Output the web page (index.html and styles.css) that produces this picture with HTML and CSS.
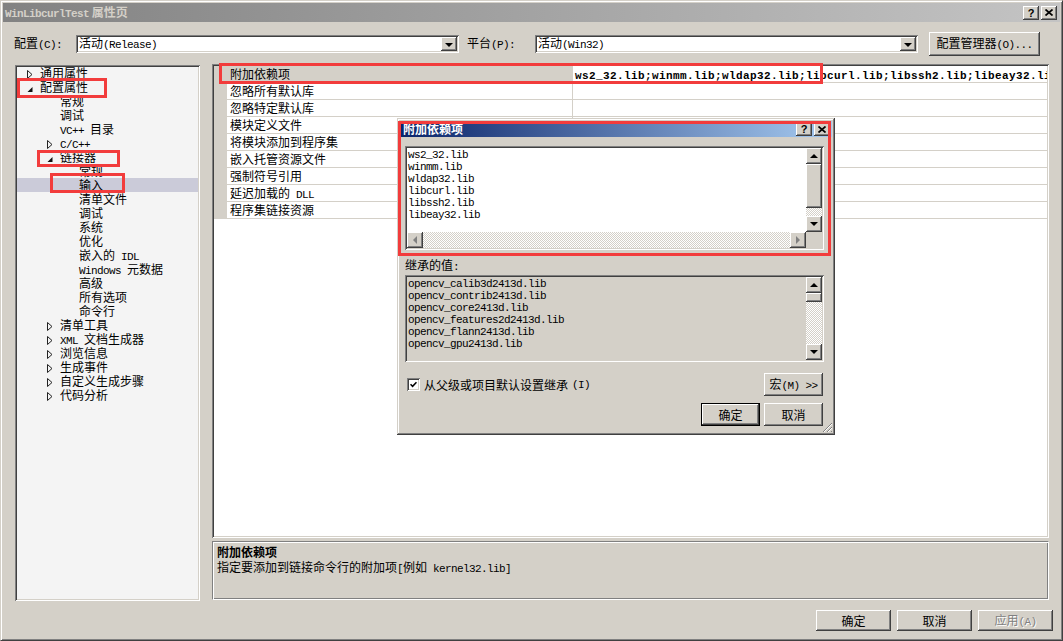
FILE: index.html
```html
<!DOCTYPE html>
<html lang="zh-CN">
<head>
    <meta charset="utf-8"/>
    <title>WinLibcurlTest 属性页</title>
    <link rel="stylesheet" href="styles.css">
</head>
<body>
<svg class="defs" width="0" height="0">
    <symbol id="tw-closed" viewBox="0 0 6 9"><path d="M.5.5 5 4.5.5 8.5z" fill="none" stroke="#222"/></symbol>
    <symbol id="tw-open" viewBox="0 0 6 9"><path d="M5.5 3v5h-5z" fill="#111"/></symbol>
    <symbol id="ic-x" viewBox="0 0 8 7"><path d="M.5.5l7 6M7.5.5l-7 6" stroke="#000" stroke-width="1.7"/></symbol>
</svg>

<div class="window">
    <div class="titlebar">
        <span class="title"><span class="m">WinLibcurlTest</span> 属性页</span>
        <div class="caption-btns">
            <span class="cap-btn">?</span>
            <span class="cap-btn"><svg width="8" height="7"><use href="#ic-x"/></svg></span>
        </div>
    </div>

    <div class="toolbar">
        <label class="tb-label first">配置<span class="m">(C):</span></label>
        <div class="combo"><span class="combo-text">活动<span class="m">(Release)</span></span><span class="drop"></span></div>
        <label class="tb-label second">平台<span class="m">(P):</span></label>
        <div class="combo"><span class="combo-text">活动<span class="m">(Win32)</span></span><span class="drop"></span></div>
        <button class="btn cfg-btn">配置管理器<span class="m">(O)...</span></button>
    </div>

    <div class="main">
        <ul class="tree">
            <li class="l0"><svg class="tw"><use href="#tw-closed"/></svg>通用属性</li>
            <li class="l0"><svg class="tw"><use href="#tw-open"/></svg>配置属性</li>
            <li class="l1">常规</li>
            <li class="l1">调试</li>
            <li class="l1"><span class="m">VC++ </span>目录</li>
            <li class="l1"><svg class="tw"><use href="#tw-closed"/></svg><span class="m">C/C++</span></li>
            <li class="l1"><svg class="tw"><use href="#tw-open"/></svg>链接器</li>
            <li class="l2">常规</li>
            <li class="l2 sel">输入</li>
            <li class="l2">清单文件</li>
            <li class="l2">调试</li>
            <li class="l2">系统</li>
            <li class="l2">优化</li>
            <li class="l2">嵌入的<span class="m"> IDL</span></li>
            <li class="l2"><span class="m">Windows </span>元数据</li>
            <li class="l2">高级</li>
            <li class="l2">所有选项</li>
            <li class="l2">命令行</li>
            <li class="l1"><svg class="tw"><use href="#tw-closed"/></svg>清单工具</li>
            <li class="l1"><svg class="tw"><use href="#tw-closed"/></svg><span class="m">XML </span>文档生成器</li>
            <li class="l1"><svg class="tw"><use href="#tw-closed"/></svg>浏览信息</li>
            <li class="l1"><svg class="tw"><use href="#tw-closed"/></svg>生成事件</li>
            <li class="l1"><svg class="tw"><use href="#tw-closed"/></svg>自定义生成步骤</li>
            <li class="l1"><svg class="tw"><use href="#tw-closed"/></svg>代码分析</li>
        </ul>

        <div class="right">
            <div class="grid">
                <div class="prop sel"><span class="gut"></span><span class="name">附加依赖项</span><span class="val"><b class="mb">ws2_32.lib;winmm.lib;wldap32.lib;libcurl.lib;libssh2.lib;libeay32.li</b></span></div>
                <div class="prop"><span class="gut"></span><span class="name">忽略所有默认库</span><span class="val"></span></div>
                <div class="prop"><span class="gut"></span><span class="name">忽略特定默认库</span><span class="val"></span></div>
                <div class="prop"><span class="gut"></span><span class="name">模块定义文件</span><span class="val"></span></div>
                <div class="prop"><span class="gut"></span><span class="name">将模块添加到程序集</span><span class="val"></span></div>
                <div class="prop"><span class="gut"></span><span class="name">嵌入托管资源文件</span><span class="val"></span></div>
                <div class="prop"><span class="gut"></span><span class="name">强制符号引用</span><span class="val"></span></div>
                <div class="prop"><span class="gut"></span><span class="name">延迟加载的<span class="m"> DLL</span></span><span class="val"></span></div>
                <div class="prop"><span class="gut"></span><span class="name">程序集链接资源</span><span class="val"></span></div>
            </div>
            <div class="desc">
                <div class="desc-title">附加依赖项</div>
                <div>指定要添加到链接命令行的附加项<span class="m">[</span>例如<span class="m"> kernel32.lib]</span></div>
            </div>
        </div>
    </div>

    <div class="footer">
        <button class="btn">确定</button>
        <button class="btn">取消</button>
        <button class="btn disabled">应用<span class="m">(A)</span></button>
    </div>

    <!-- 附加依赖项 弹出框 -->
    <div class="dlg">
        <div class="dlg-title">
            <span>附加依赖项</span>
            <div class="caption-btns">
                <span class="cap-btn">?</span>
                <span class="cap-btn"><svg width="8" height="7"><use href="#ic-x"/></svg></span>
            </div>
        </div>
        <div class="dlg-body">
            <div class="edit">
                <div class="edit-text mono">ws2_32.lib<br>winmm.lib<br>wldap32.lib<br>libcurl.lib<br>libssh2.lib<br>libeay32.lib</div>
                <div class="vscroll">
                    <span class="sb up"></span><span class="thumb big"></span><span class="track"></span><span class="sb dn"></span>
                </div>
                <div class="hscroll">
                    <span class="sb lt"></span><span class="track"></span><span class="sb rt"></span>
                </div>
                <div class="corner"></div>
            </div>
            <div class="inh-label">继承的值<span class="m">:</span></div>
            <div class="inh">
                <div class="inh-text mono">opencv_calib3d2413d.lib<br>opencv_contrib2413d.lib<br>opencv_core2413d.lib<br>opencv_features2d2413d.lib<br>opencv_flann2413d.lib<br>opencv_gpu2413d.lib</div>
                <div class="vscroll">
                    <span class="sb up"></span><span class="thumb small"></span><span class="track"></span><span class="sb dn"></span>
                </div>
            </div>
            <div class="dlg-row">
                <label class="chk"><span class="box"><svg width="7" height="7" viewBox="0 0 7 7"><path d="M.5 3.2 2.6 5.3 6.5 1.2" fill="none" stroke="#000" stroke-width="1.6"/></svg></span>从父级或项目默认设置继承<span class="m">(I)</span></label>
                <button class="btn dbtn">宏<span class="m">(M) &gt;&gt;</span></button>
            </div>
            <div class="dlg-row end">
                <button class="btn dbtn default">确定</button>
                <button class="btn dbtn">取消</button>
            </div>
        </div>
        <svg class="grip" width="11" height="11" viewBox="0 0 11 11">
            <path d="M10 1 1 10M10 5 5 10M10 9 9 10" stroke="#808080"/>
            <path d="M10 2 2 10M10 6 6 10" stroke="#fff"/>
        </svg>
    </div>

    <!-- 红色标注框 -->
    <div class="mark mark-cfg"></div>
    <div class="mark mark-linker"></div>
    <div class="mark mark-input"></div>
    <div class="mark mark-row"></div>
    <div class="mark mark-dlg"></div>
</div>
</body>
</html>
```

FILE: styles.css
```css
* {
    box-sizing: border-box;
}

html, body {
    margin: 0;
    overflow: hidden;
}

body {
    background-color: #d4d0c8;
    font-family: "Noto Sans CJK SC", "Liberation Sans", sans-serif;
    font-size: 12px;
    color: #000;
}

.defs {
    position: absolute;
}

.m {
    font-family: "Liberation Mono", "Noto Sans CJK SC", monospace;
    font-size: 11px;
    letter-spacing: -0.6px;
}

.mono {
    font-family: "Liberation Mono", monospace;
    font-size: 11px;
    letter-spacing: -0.6px;
    line-height: 12px;
}

.window {
    position: relative;
    width: 1063px;
    height: 641px;
    border: 1px solid;
    border-color: #d4d0c8 #404040 #404040 #d4d0c8;
    box-shadow: inset 1px 1px #fff, inset -1px -1px #808080;
    padding: 2px;
    overflow: hidden;
}

/* 3D 边框 */
.btn, .cap-btn, .sb, .thumb, .drop {
    background-color: #d4d0c8;
    box-shadow: inset -1px -1px #404040, inset 1px 1px #fff, inset -2px -2px #808080, inset 2px 2px #d4d0c8;
}

.combo, .edit, .inh, .box, .tree, .grid {
    box-shadow: inset 1px 1px #808080, inset -1px -1px #fff, inset 2px 2px #404040, inset -2px -2px #d4d0c8;
}

.titlebar {
    display: flex;
    align-items: center;
    height: 19px;
    padding: 0 3px 0 2px;
    background: linear-gradient(to right, #828282, #c4c4c4);
}

.title {
    font-weight: bold;
    color: #d4d0c8;
    line-height: 19px;
}

.caption-btns {
    display: flex;
    gap: 2px;
    margin-left: auto;
}

.cap-btn {
    display: flex;
    align-items: center;
    justify-content: center;
    width: 16px;
    height: 14px;
    font-family: "Liberation Sans", sans-serif;
    font-size: 11px;
    font-weight: bold;
    line-height: 14px;
    color: #000;
}

.toolbar {
    display: flex;
    align-items: center;
    height: 26px;
    margin-top: 9px;
}

.tb-label {
    line-height: 14px;
}

.tb-label.first {
    width: 73px;
    padding-left: 11px;
}

.tb-label.second {
    width: 68px;
    margin-left: 8px;
}

.combo {
    display: flex;
    align-items: center;
    width: 383px;
    height: 18px;
    padding: 2px;
    background-color: #fff;
}

.combo-text {
    flex: 1;
    padding-left: 1px;
    line-height: 14px;
}

.drop {
    display: flex;
    align-items: center;
    justify-content: center;
    width: 16px;
    height: 14px;
}

.drop::after, .sb::after {
    content: "";
    border: 4px solid transparent;
}

.drop::after {
    border-top-color: #000;
    border-bottom-width: 0;
    margin-top: 1px;
}

.btn {
    border: 0;
    padding: 0;
    font-family: inherit;
    font-size: 12px;
    color: #000;
    line-height: 14px;
}

.cfg-btn {
    width: 111px;
    height: 24px;
    margin-left: 11px;
}

.main {
    display: flex;
    gap: 12px;
    height: 536px;
    margin-top: 7px;
    padding-left: 12px;
}

.tree {
    width: 185px;
    height: 536px;
    margin: 1px 0 0;
    padding: 1px 2px 2px;
    list-style: none;
    background-color: #f4f4f4;
}

.tree li {
    height: 14px;
    line-height: 14px;
    white-space: nowrap;
}

.tree .l0 {
    padding-left: 23px;
}

.tree .l1 {
    padding-left: 43px;
}

.tree .l2 {
    padding-left: 62px;
}

.tree .sel {
    background-color: #cbcbd9;
}

.tw {
    display: inline-block;
    width: 6px;
    height: 9px;
    margin-left: -13px;
    margin-right: 7px;
    vertical-align: -1px;
}

.right {
    display: flex;
    flex-direction: column;
    gap: 3px;
    width: 837px;
}

.grid {
    height: 474px;
    padding: 2px;
    background-color: #fff;
    overflow: hidden;
}

.prop {
    display: flex;
    height: 17px;
    line-height: 16px;
}

.prop .gut {
    width: 13px;
    background-color: #d4d0c8;
}

.prop .name {
    width: 346px;
    padding-left: 3px;
    border-right: 1px solid #d4d0c8;
    border-bottom: 1px solid #d4d0c8;
    white-space: nowrap;
}

.prop .val {
    flex: 1;
    padding-left: 2px;
    border-bottom: 1px solid #d4d0c8;
    white-space: nowrap;
    overflow: hidden;
}

.prop.sel .name {
    background-color: #d4d0c8;
}

.mb {
    font-family: "Liberation Mono", monospace;
    font-size: 11px;
    letter-spacing: 0.4px;
}

.desc {
    height: 59px;
    padding: 2px 4px;
    border: 1px solid;
    border-color: #808080 #fff #fff #808080;
    box-shadow: inset 1px 1px #fff, inset -1px -1px #808080;
    line-height: 15px;
}

.desc-title {
    font-weight: bold;
}

.footer {
    display: flex;
    justify-content: flex-end;
    gap: 6px;
    margin-top: 10px;
    padding-right: 7px;
}

.footer .btn {
    width: 75px;
    height: 21px;
}

.btn.disabled {
    color: #808080;
    text-shadow: 1px 1px #fff;
}

/* 弹出框 */
.dlg {
    position: absolute;
    left: 396px;
    top: 117px;
    width: 438px;
    height: 317px;
    padding: 3px;
    background-color: #d4d0c8;
    box-shadow: inset -1px -1px #404040, inset 1px 1px #d4d0c8, inset -2px -2px #808080, inset 2px 2px #fff;
}

.dlg-title {
    display: flex;
    align-items: center;
    height: 16px;
    padding: 0 2px 0 3px;
    background: linear-gradient(to right, #0a246a, #a6caf0);
    color: #fff;
    font-weight: bold;
    line-height: 16px;
}

.dlg-body {
    padding: 9px 8px 0 5px;
}

.edit {
    display: grid;
    grid-template-columns: 1fr 16px;
    grid-template-rows: 84px 16px;
    height: 104px;
    padding: 2px;
    background-color: #fff;
}

.edit-text {
    padding: 1px 0 0 1px;
    overflow: hidden;
}

.vscroll {
    display: flex;
    flex-direction: column;
}

.hscroll {
    display: flex;
}

.sb {
    display: flex;
    align-items: center;
    justify-content: center;
    flex: none;
    width: 16px;
    height: 16px;
}

.sb.up::after {
    border-bottom-color: #000;
    border-top-width: 0;
}

.sb.dn::after {
    border-top-color: #000;
    border-bottom-width: 0;
}

.sb.lt::after {
    border-right-color: #808080;
    border-left-width: 0;
}

.sb.rt::after {
    border-left-color: #808080;
    border-right-width: 0;
}

.thumb {
    flex: none;
    width: 16px;
}

.thumb.big {
    height: 44px;
}

.thumb.small {
    height: 9px;
}

.track {
    flex: 1;
    background-color: #fff;
    background-image: conic-gradient(#d4d0c8 25%, #fff 0 50%, #d4d0c8 0 75%, #fff 0);
    background-size: 2px 2px;
}

.corner {
    background-color: #d4d0c8;
}

.inh-label {
    margin: 8px 0 1px;
    line-height: 14px;
}

.inh {
    display: grid;
    grid-template-columns: 1fr 16px;
    height: 87px;
    padding: 2px;
    background-color: #d4d0c8;
}

.inh-text {
    padding: 1px 0 0 1px;
    overflow: hidden;
}

.dlg-row {
    display: flex;
    align-items: center;
    justify-content: space-between;
    margin-top: 11px;
    padding-right: 1px;
}

.dlg-row.end {
    justify-content: flex-end;
    gap: 4px;
    margin-top: 7px;
}

.dbtn {
    width: 59px;
    height: 23px;
}

.btn.default {
    border: 1px solid #000;
    box-shadow: inset -1px -1px #404040, inset 1px 1px #fff, inset -2px -2px #808080;
}

.chk {
    display: flex;
    align-items: center;
    gap: 4px;
    padding-left: 2px;
    line-height: 14px;
}

.box {
    display: flex;
    align-items: center;
    justify-content: center;
    width: 13px;
    height: 13px;
    background-color: #fff;
}

.grip {
    position: absolute;
    right: 2px;
    bottom: 2px;
}

/* 标注 */
.mark {
    position: absolute;
    border: 3px solid #f23c3c;
}

.mark-cfg {
    left: 16px;
    top: 77px;
    width: 90px;
    height: 20px;
}

.mark-linker {
    left: 36px;
    top: 149px;
    width: 83px;
    height: 17px;
}

.mark-input {
    left: 49px;
    top: 172px;
    width: 75px;
    height: 20px;
}

.mark-row {
    left: 218px;
    top: 62px;
    width: 604px;
    height: 21px;
}

.mark-dlg {
    left: 397px;
    top: 120px;
    width: 433px;
    height: 135px;
}
```
